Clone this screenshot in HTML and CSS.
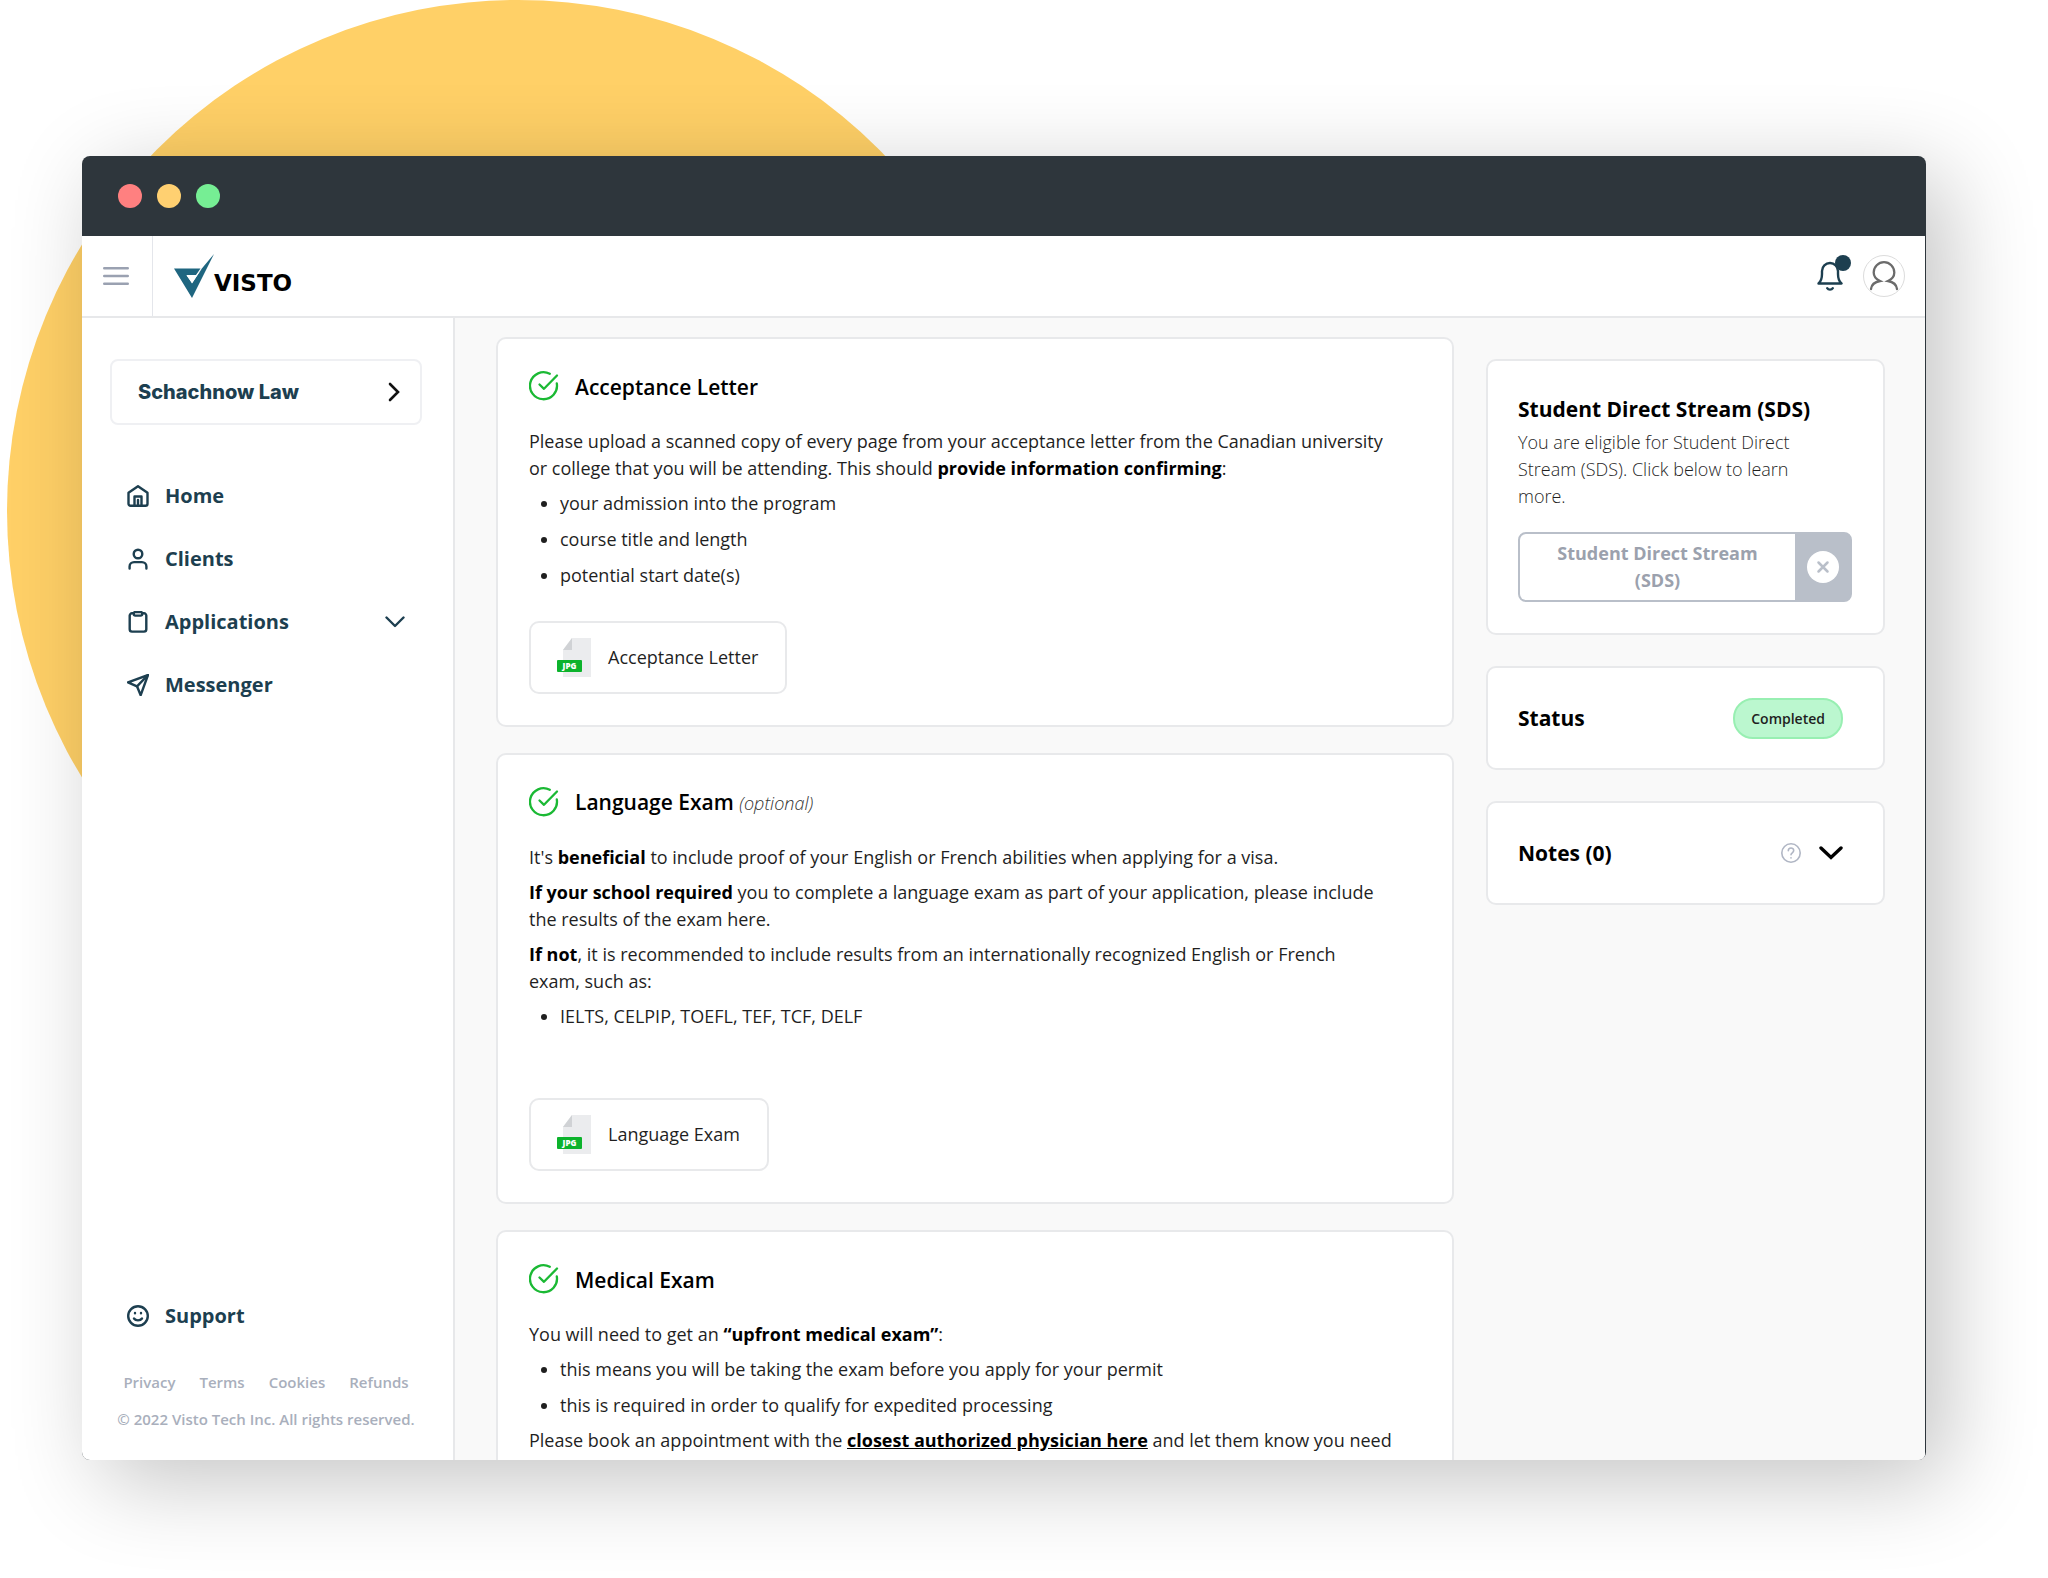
FILE: index.html
```html
<!DOCTYPE html>
<html lang="en">
<head>
    <meta charset="UTF-8">
    <meta name="viewport" content="width=device-width, initial-scale=1.0">
    <title>Visto - Application Documents</title>
    <link rel="stylesheet" href="styles.css">
</head>
<body>
    <div class="stage">
        <div class="backdrop-circle"></div>
        <div class="window">
            <div class="titlebar">
                <span class="dot dot-red"></span>
                <span class="dot dot-yellow"></span>
                <span class="dot dot-green"></span>
            </div>

            <div class="app">
                <header class="topbar">
                    <button class="menu-btn" type="button" aria-label="Menu">
                        <svg width="26" height="20" viewBox="0 0 26 20" fill="none" stroke="#9aa1b1" stroke-width="2.4" stroke-linecap="round"><path d="M1.200 2.200h23.600M1.200 10h23.600M1.200 17.800h23.600"/></svg>
                    </button>
                    <a class="logo" href="#">
                        <svg width="40" height="44" viewBox="0 0 40 44"><path fill="#1f6680" d="M0 14.500H26.500L22 21H12.500L18 29.500L27 15.500L40 0L18 44Z"/><path fill="#fff" d="M12.500 21.500h7l-1.500 2 1 1.500 9-10.500-9.800 14.500z"/></svg>
                        <span>VISTO</span>
                    </a>
                    <div class="topbar-actions">
                        <button class="bell" type="button" aria-label="Notifications">
                            <svg width="26" height="30" viewBox="0 0 26 30" fill="none" stroke="#1d3f50" stroke-width="2.4" stroke-linecap="round" stroke-linejoin="round"><path d="M1.500 22.500c2.600-2.200 3.500-5 3.500-9.500V10a8 8 0 0 1 16 0v3c0 4.500.9 7.300 3.500 9.500z"/><path d="M10.200 27.200c1.200 1.900 4.400 1.900 5.600 0"/></svg>
                            <span class="bell-dot"></span>
                        </button>
                        <button class="avatar" type="button" aria-label="Account">
                            <svg width="30" height="30" viewBox="0 0 30 30" fill="none" stroke="#6b6b6b" stroke-width="2.3" stroke-linecap="round"><path d="M2 28c.5-4.500 3.500-7 9-8C7 18.200 4.700 15.200 4.700 11.500a10.300 10.300 0 0 1 20.600 0c0 3.700-2.300 6.700-6.300 8.500 5.500 1 8.500 3.500 9 8"/></svg>
                        </button>
                    </div>
                </header>

                <div class="layout">
                    <nav class="sidebar">
                        <button class="org" type="button">
                            <span>Schachnow Law</span>
                            <svg width="12" height="20" viewBox="0 0 12 20" fill="none" stroke="#111" stroke-width="2.600" stroke-linecap="round"><path d="M2 2l8 8-8 8"/></svg>
                        </button>
                        <ul class="nav-list">
                            <li><a href="#">
                                <svg class="nav-icon" viewBox="0 0 22 22"><path d="M1.500 7.800L11 1.200l9.500 6.600v10.900a2 2 0 0 1-2 2h-15a2 2 0 0 1-2-2z"/><path d="M7.500 20.500v-9h7v9M11 15v5.500"/></svg>
                                Home</a></li>
                            <li><a href="#">
                                <svg class="nav-icon" viewBox="0 0 22 22"><circle cx="11" cy="6" r="4.300"/><path d="M2.600 20.600v-2a4.500 4.500 0 0 1 4.500-4.500h7.800a4.500 4.500 0 0 1 4.500 4.500v2"/></svg>
                                Clients</a></li>
                            <li><a href="#">
                                <svg class="nav-icon" viewBox="0 0 22 22"><path d="M6.500 2.300H5a2.300 2.300 0 0 0-2.300 2.300v13.700a2.300 2.300 0 0 0 2.300 2.300h12a2.300 2.300 0 0 0 2.300-2.300V4.600A2.300 2.300 0 0 0 17 2.300h-1.500"/><rect x="6.800" y="1" width="8.400" height="3.600" rx="1.500"/></svg>
                                Applications
                                <svg class="nav-chevron" width="20" height="12" viewBox="0 0 20 12"><path d="M1.500 1.500L10 10l8.500-8.500"/></svg></a></li>
                            <li><a href="#">
                                <svg class="nav-icon" viewBox="0 0 22 22"><path d="M21 1L1 8.300l9 4L13.700 21.200z"/><path d="M21 1L10 12.300"/></svg>
                                Messenger</a></li>
                        </ul>
                        <div class="sidebar-bottom">
                            <a class="support" href="#">
                                <svg class="nav-icon" viewBox="0 0 22 22"><circle cx="11" cy="11" r="9.800"/><path d="M7 13.500c1.700 2.500 6.300 2.500 8 0M8 8v.2M14 8v.2"/></svg>
                                Support</a>
                            <div class="legal">
                                <a href="#">Privacy</a>
                                <a href="#">Terms</a>
                                <a href="#">Cookies</a>
                                <a href="#">Refunds</a>
                            </div>
                            <p class="copyright">© 2022 Visto Tech Inc. All rights reserved.</p>
                        </div>
                    </nav>

                    <main class="content">
                        <div class="documents">
                            <section class="card">
                                <div class="card-title">
                                    <svg class="check" viewBox="0 0 30 30"><path d="M27.800 12.500A13.500 13.500 0 1 1 20.800 2.800"/><path d="M10.500 13.500l4.500 4.300L28 4.500"/></svg>
                                    <h2>Acceptance Letter</h2>
                                </div>
                                <div class="card-body">
                                    <p>Please upload a scanned copy of every page from your acceptance letter from the Canadian university or college that you will be attending. This should <strong>provide information confirming</strong>:</p>
                                    <ul>
                                        <li>your admission into the program</li>
                                        <li>course title and length</li>
                                        <li>potential start date(s)</li>
                                    </ul>
                                </div>
                                <button class="file" type="button">
                                    <svg width="34" height="39" viewBox="0 0 34 39"><path fill="#ebecee" d="M15 0h19v39H6V12z"/><path fill="#d0d2d5" d="M15 0v12H6z"/><rect y="22" width="25" height="12" rx="1" fill="#0cb32c"/><text class="file-type" x="12.500" y="31" text-anchor="middle">JPG</text></svg>
                                    Acceptance Letter
                                </button>
                            </section>

                            <section class="card">
                                <div class="card-title">
                                    <svg class="check" viewBox="0 0 30 30"><path d="M27.800 12.500A13.500 13.500 0 1 1 20.800 2.800"/><path d="M10.500 13.500l4.500 4.300L28 4.500"/></svg>
                                    <h2>Language Exam <em>(optional)</em></h2>
                                </div>
                                <div class="card-body card-body-spaced">
                                    <p>It's <strong>beneficial</strong> to include proof of your English or French abilities when applying for a visa.</p>
                                    <p><strong>If your school required</strong> you to complete a language exam as part of your application, please include the results of the exam here.</p>
                                    <p><strong>If not</strong>, it is recommended to include results from an internationally recognized English or French exam, such as:</p>
                                    <ul>
                                        <li>IELTS, CELPIP, TOEFL, TEF, TCF, DELF</li>
                                    </ul>
                                </div>
                                <button class="file" type="button">
                                    <svg width="34" height="39" viewBox="0 0 34 39"><path fill="#ebecee" d="M15 0h19v39H6V12z"/><path fill="#d0d2d5" d="M15 0v12H6z"/><rect y="22" width="25" height="12" rx="1" fill="#0cb32c"/><text class="file-type" x="12.500" y="31" text-anchor="middle">JPG</text></svg>
                                    Language Exam
                                </button>
                            </section>

                            <section class="card">
                                <div class="card-title">
                                    <svg class="check" viewBox="0 0 30 30"><path d="M27.800 12.500A13.500 13.500 0 1 1 20.800 2.800"/><path d="M10.500 13.500l4.500 4.300L28 4.500"/></svg>
                                    <h2>Medical Exam</h2>
                                </div>
                                <div class="card-body">
                                    <p>You will need to get an <strong>“upfront medical exam”</strong>:</p>
                                    <ul>
                                        <li>this means you will be taking the exam before you apply for your permit</li>
                                        <li>this is required in order to qualify for expedited processing</li>
                                    </ul>
                                    <p>Please book an appointment with the <a href="#">closest authorized physician here</a> and let them know you need</p>
                                </div>
                            </section>
                        </div>

                        <aside class="details">
                            <section class="panel">
                                <h3>Student Direct Stream (SDS)</h3>
                                <p>You are eligible for Student Direct Stream (SDS). Click below to learn more.</p>
                                <button class="sds" type="button">
                                    <span class="sds-label">Student Direct Stream (SDS)</span>
                                    <span class="sds-close">
                                        <svg width="32" height="32" viewBox="0 0 32 32"><circle cx="16" cy="16" r="16" fill="#fff"/><path d="M11.500 11.500l9 9m0-9l-9 9" stroke="#b9bfc9" stroke-width="2.500" stroke-linecap="round"/></svg>
                                    </span>
                                </button>
                            </section>
                            <section class="panel panel-row">
                                <h3>Status</h3>
                                <span class="badge">Completed</span>
                            </section>
                            <section class="panel panel-row">
                                <h3>Notes (0)</h3>
                                <button class="notes-toggle" type="button" aria-label="Show notes">
                                    <svg width="20" height="20" viewBox="0 0 20 20" fill="none" stroke="#b0b6c4" stroke-width="1.600" stroke-linecap="round"><circle cx="10" cy="10" r="9.200"/><path d="M7.300 7.800c0-3.600 5.400-3.600 5.400-.2 0 2.200-2.700 2.200-2.700 4.200M10 14.800v.2"/></svg>
                                    <svg width="24" height="14" viewBox="0 0 24 14" fill="none" stroke="#000" stroke-width="3.400" stroke-linecap="round"><path d="M2 2l10 9.500L22 2"/></svg>
                                </button>
                            </section>
                        </aside>
                    </main>
                </div>
            </div>
        </div>
    </div>
</body>
</html>
```
FILE: styles.css
```css
* {
    box-sizing: border-box;
    margin: 0;
    padding: 0;
}
body {
    font-family: 'Open Sans', sans-serif;
    font-size: 18px;
    line-height: 27px;
    color: #1f1f1f;
    background: #fff;
}
button {
    font: inherit;
    color: inherit;
    background: none;
    border: none;
    cursor: pointer;
}
a {
    color: inherit;
    text-decoration: none;
}
ul {
    list-style: none;
}
svg {
    flex-shrink: 0;
}
.stage {
    position: relative;
    height: 100vh;
    padding: 156px 122px 118px 82px;
    overflow: hidden;
}
.backdrop-circle {
    position: absolute;
    top: 0;
    left: 7px;
    width: 1022px;
    height: 1022px;
    border-radius: 50%;
    background: #ffd067;
}

/* browser window */
.window {
    position: relative;
    display: flex;
    flex-direction: column;
    height: 100%;
    border-radius: 8px;
    background: #2e363c;
    box-shadow: 20px 20px 90px rgba(0, 0, 0, 0.24);
    overflow: hidden;
}
.titlebar {
    display: flex;
    align-items: center;
    gap: 15px;
    height: 80px;
    padding-left: 36px;
    flex-shrink: 0;
}
.dot {
    width: 24px;
    height: 24px;
    border-radius: 50%;
}
.dot-red {
    background: #ff8080;
}
.dot-yellow {
    background: #ffd071;
}
.dot-green {
    background: #76ee94;
}
.app {
    display: flex;
    flex-direction: column;
    flex: 1;
    min-height: 0;
    margin-right: 1px;
    background: #fff;
    border-radius: 0 0 6px 0;
    overflow: hidden;
}

/* top bar */
.topbar {
    display: flex;
    align-items: stretch;
    height: 82px;
    border-bottom: 2px solid #e7e8ea;
    flex-shrink: 0;
}
.menu-btn {
    display: flex;
    align-items: center;
    padding: 0 23px 0 21px;
    border-right: 1px solid #e4e6eb;
}
.logo {
    display: flex;
    align-items: center;
    padding-left: 21px;
    font-family: 'DejaVu Sans', sans-serif;
    font-size: 23px;
    font-weight: 700;
    color: #000;
}
.logo span {
    padding-top: 14px;
}
.topbar-actions {
    display: flex;
    align-items: center;
    gap: 20px;
    margin-left: auto;
    padding-right: 20px;
}
.bell {
    position: relative;
    display: flex;
}
.bell-dot {
    position: absolute;
    top: -6px;
    right: -8px;
    width: 16px;
    height: 16px;
    border-radius: 50%;
    background: #1d3f50;
}
.avatar {
    display: flex;
    align-items: center;
    justify-content: center;
    width: 42px;
    height: 42px;
    border: 1px solid #dcdcdc;
    border-radius: 50%;
}

/* sidebar */
.layout {
    display: flex;
    flex: 1;
    min-height: 0;
}
.sidebar {
    display: flex;
    flex-direction: column;
    width: 373px;
    padding: 41px 31px 27px 28px;
    border-right: 2px solid #e7e8ea;
    color: #1d3f50;
    flex-shrink: 0;
}
.org {
    display: flex;
    align-items: center;
    justify-content: space-between;
    height: 66px;
    padding: 0 20px 0 26px;
    border: 2px solid #eff0f3;
    border-radius: 8px;
    font-family: Inter, sans-serif;
    font-size: 20px;
    font-weight: 800;
}
.nav-list {
    display: flex;
    flex-direction: column;
    gap: 36px;
    margin-top: 57px;
    padding: 0 17px;
}
.nav-list a,
.support {
    display: flex;
    align-items: center;
    gap: 16px;
    font-size: 20px;
    font-weight: 700;
}
.nav-icon {
    width: 22px;
    height: 22px;
}
.nav-icon,
.nav-chevron {
    fill: none;
    stroke: #1d3f50;
    stroke-width: 2.4;
    stroke-linecap: round;
    stroke-linejoin: round;
}
.nav-chevron {
    margin-left: auto;
}
.sidebar-bottom {
    margin-top: auto;
}
.support {
    padding-left: 17px;
}
.legal {
    display: flex;
    justify-content: center;
    gap: 24px;
    margin-top: 40px;
}
.legal,
.copyright {
    font-size: 15px;
    font-weight: 600;
    color: #a9afbc;
}
.copyright {
    margin-top: 10px;
    text-align: center;
    white-space: nowrap;
}

/* documents */
.content {
    display: flex;
    align-items: flex-start;
    gap: 32px;
    flex: 1;
    min-width: 0;
    padding: 19px 40px 0 41px;
    background: #f9f9f9;
    overflow: hidden;
}
.documents {
    display: flex;
    flex-direction: column;
    gap: 26px;
    flex: 1;
    min-width: 0;
}
.card,
.panel {
    background: #fff;
    border: 2px solid #e8e9eb;
    border-radius: 10px;
}
.card {
    padding: 31px;
}
.card-title {
    display: flex;
    align-items: center;
    gap: 16px;
    height: 32px;
    margin-bottom: 26px;
}
.card-title h2 {
    padding-top: 2px;
    font-size: 21px;
    font-weight: 600;
    color: #000;
}
.card-title em {
    font-size: 18px;
    font-weight: 300;
    color: #333;
}
.check {
    width: 30px;
    height: 30px;
    fill: none;
    stroke: #1bb934;
    stroke-width: 2.3;
    stroke-linecap: round;
    stroke-linejoin: round;
}
.card-body {
    display: flex;
    flex-direction: column;
    gap: 8px;
    margin-bottom: 32px;
    padding-right: 20px;
}
.card-body-spaced {
    margin-bottom: 68px;
    padding-right: 32px;
}
.card-body strong,
.card-body a {
    font-weight: 700;
    color: #000;
}
.card-body a {
    text-decoration: underline;
}
.card-body ul {
    display: flex;
    flex-direction: column;
    gap: 9px;
    list-style: disc;
    padding-left: 31px;
}
.file {
    display: inline-flex;
    align-items: center;
    gap: 17px;
    height: 73px;
    padding: 0 27px 0 26px;
    border: 2px solid #e8e9eb;
    border-radius: 10px;
}
.file-type {
    font-size: 8px;
    font-weight: 800;
    fill: #fff;
}

/* right column */
.details {
    display: flex;
    flex-direction: column;
    gap: 31px;
    width: 399px;
    margin-top: 22px;
    flex-shrink: 0;
}
.panel {
    padding: 30px;
}
.panel h3 {
    font-size: 21px;
    font-weight: 700;
    line-height: 36px;
    color: #000;
}
.panel p {
    margin-top: 2px;
    padding-right: 20px;
    font-weight: 300;
}
.sds {
    display: flex;
    width: 334px;
    margin: 22px 0 1px;
    border: 2px solid #b9bfc9;
    border-radius: 8px;
    background: #b9bfc9;
    overflow: hidden;
    font-weight: 700;
    color: #9ba1ad;
}
.sds-label {
    flex: 1;
    padding: 6px 20px;
    background: #fff;
}
.sds-close {
    display: flex;
    align-items: center;
    justify-content: center;
    width: 55px;
}
.panel-row {
    display: flex;
    align-items: center;
    justify-content: space-between;
    height: 104px;
    padding-right: 40px;
}
.badge {
    padding: 5px 16px;
    border: 2px solid #98efb2;
    border-radius: 20px;
    background: #bbf7cf;
    font-size: 14px;
    font-weight: 600;
}
.notes-toggle {
    display: flex;
    align-items: center;
    gap: 18px;
}
```
